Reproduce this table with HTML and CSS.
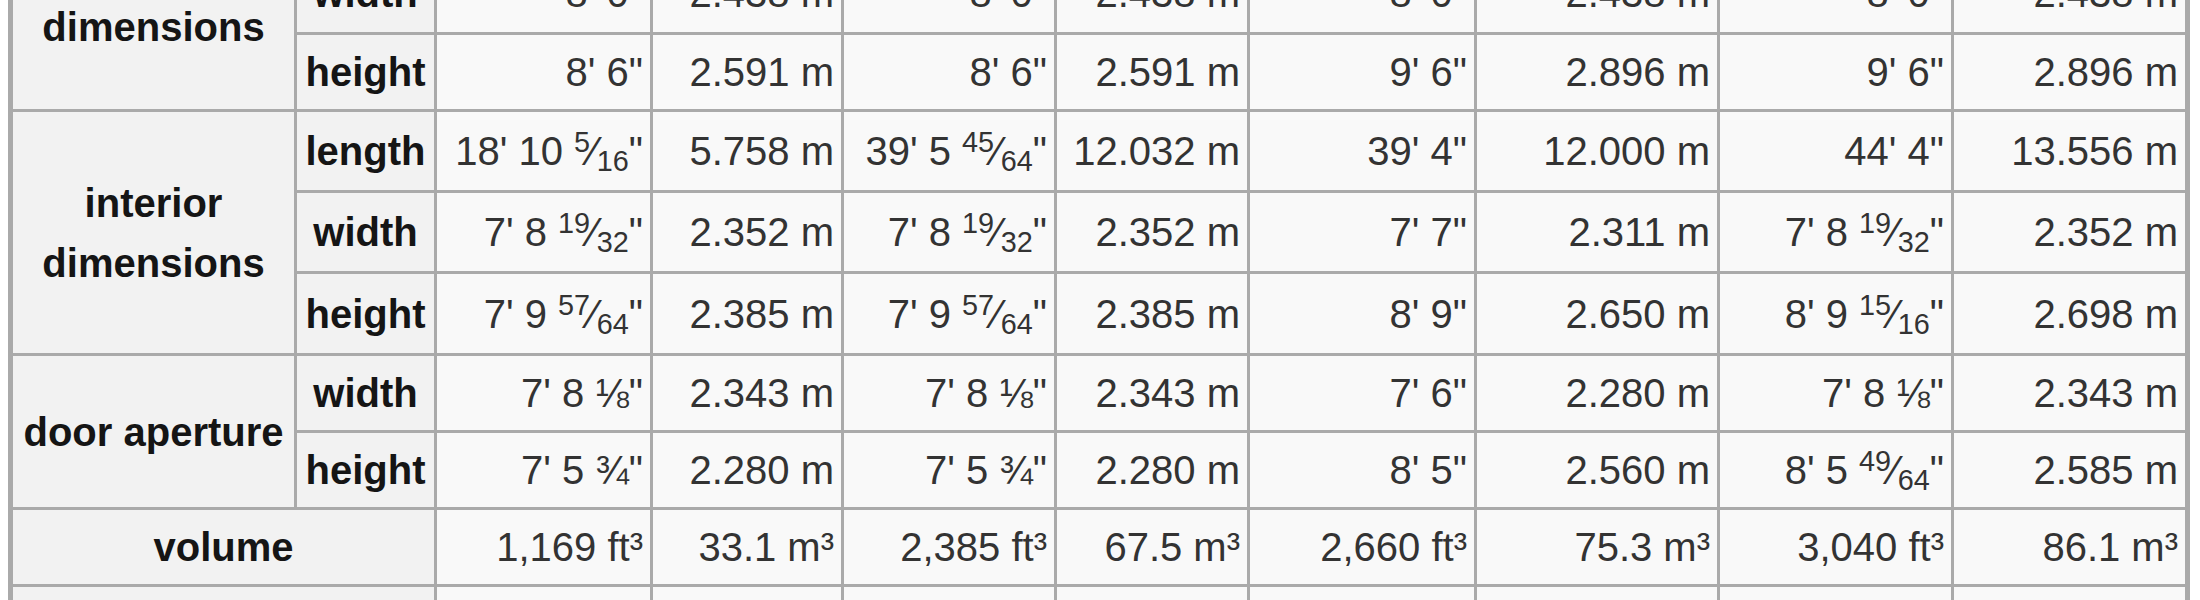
FILE: index.html
```html
<!DOCTYPE html>
<html lang="en">
<head>
<meta charset="utf-8">
<title>Container dimensions</title>
<link rel="stylesheet" href="styles.css">
</head>
<body>
<table class="spec">
  <colgroup>
    <col class="w-group">
    <col class="w-sub">
    <col class="w-d1">
    <col class="w-d2">
    <col class="w-d3">
    <col class="w-d4">
    <col class="w-d5">
    <col class="w-d6">
    <col class="w-d7">
    <col class="w-d8">
  </colgroup>
  <tbody>
    <tr class="rh-ext-len">
      <th class="grp" rowspan="3">external dimensions</th>
      <th class="sub">length</th>
      <td>19' 10 ½"</td><td>6.058 m</td><td>40' 0"</td><td>12.192 m</td><td>40' 0"</td><td>12.192 m</td><td>45' 0"</td><td>13.716 m</td>
    </tr>
    <tr class="rh-82">
      <th class="sub">width</th>
      <td>8' 0"</td><td>2.438 m</td><td>8' 0"</td><td>2.438 m</td><td>8' 0"</td><td>2.438 m</td><td>8' 0"</td><td>2.438 m</td>
    </tr>
    <tr class="rh-77">
      <th class="sub">height</th>
      <td>8' 6"</td><td>2.591 m</td><td>8' 6"</td><td>2.591 m</td><td>9' 6"</td><td>2.896 m</td><td>9' 6"</td><td>2.896 m</td>
    </tr>
    <tr class="rh-81">
      <th class="grp" rowspan="3">interior dimensions</th>
      <th class="sub">length</th>
      <td>18' 10 <sup>5</sup>⁄<sub>16</sub>"</td><td>5.758 m</td>
      <td>39' 5 <sup>45</sup>⁄<sub>64</sub>"</td><td>12.032 m</td>
      <td>39' 4"</td><td>12.000 m</td>
      <td>44' 4"</td><td>13.556 m</td>
    </tr>
    <tr class="rh-81">
      <th class="sub">width</th>
      <td>7' 8 <sup>19</sup>⁄<sub>32</sub>"</td><td>2.352 m</td>
      <td>7' 8 <sup>19</sup>⁄<sub>32</sub>"</td><td>2.352 m</td>
      <td>7' 7"</td><td>2.311 m</td>
      <td>7' 8 <sup>19</sup>⁄<sub>32</sub>"</td><td>2.352 m</td>
    </tr>
    <tr class="rh-82">
      <th class="sub">height</th>
      <td>7' 9 <sup>57</sup>⁄<sub>64</sub>"</td><td>2.385 m</td>
      <td>7' 9 <sup>57</sup>⁄<sub>64</sub>"</td><td>2.385 m</td>
      <td>8' 9"</td><td>2.650 m</td>
      <td>8' 9 <sup>15</sup>⁄<sub>16</sub>"</td><td>2.698 m</td>
    </tr>
    <tr class="rh-77">
      <th class="grp" rowspan="2">door aperture</th>
      <th class="sub">width</th>
      <td>7' 8 ⅛"</td><td>2.343 m</td>
      <td>7' 8 ⅛"</td><td>2.343 m</td>
      <td>7' 6"</td><td>2.280 m</td>
      <td>7' 8 ⅛"</td><td>2.343 m</td>
    </tr>
    <tr class="rh-77">
      <th class="sub">height</th>
      <td>7' 5 ¾"</td><td>2.280 m</td>
      <td>7' 5 ¾"</td><td>2.280 m</td>
      <td>8' 5"</td><td>2.560 m</td>
      <td>8' 5 <sup>49</sup>⁄<sub>64</sub>"</td><td>2.585 m</td>
    </tr>
    <tr class="rh-77">
      <th class="grp" colspan="2">volume</th>
      <td>1,169 ft³</td><td>33.1 m³</td>
      <td>2,385 ft³</td><td>67.5 m³</td>
      <td>2,660 ft³</td><td>75.3 m³</td>
      <td>3,040 ft³</td><td>86.1 m³</td>
    </tr>
    <tr class="rh-77">
      <th class="grp" colspan="2">empty weight</th>
      <td>4,850 lb</td><td>2,200 kg</td>
      <td>8,380 lb</td><td>3,800 kg</td>
      <td>8,598 lb</td><td>3,900 kg</td>
      <td>10,580 lb</td><td>4,800 kg</td>
    </tr>
  </tbody>
</table>
</body>
</html>
```
FILE: styles.css
```css
html, body {
  margin: 0;
  padding: 0;
  background: #ffffff;
}

body {
  font-family: "Liberation Sans", Arial, sans-serif;
  font-size: 40px;
  color: #333333;
  overflow: hidden;
}

.spec {
  table-layout: fixed;
  width: 2177px;
  border-collapse: collapse;
  border: 5px solid #aaaaaa;
  margin: -120px 0 0 8px;
  background: #f9f9f9;
}

.w-group { width: 285px; }
.w-sub { width: 140px; }
.w-d1 { width: 216px; }
.w-d2 { width: 191px; }
.w-d3 { width: 213px; }
.w-d4 { width: 193px; }
.w-d5 { width: 227px; }
.w-d6 { width: 243px; }
.w-d7 { width: 234px; }
.w-d8 { width: 235px; }

.rh-ext-len { height: 69px; }
.rh-77 { height: 77px; }
.rh-81 { height: 81px; }
.rh-82 { height: 82px; }

.spec th,
.spec td {
  border: 3px solid #aaaaaa;
  line-height: 60px;
  vertical-align: middle;
  white-space: nowrap;
  overflow: hidden;
}

.spec td {
  text-align: right;
  padding: 0 7px 0 3px;
  background: #f9f9f9;
  color: #333333;
}

.spec th {
  background: #f2f2f2;
  color: #151515;
  font-weight: bold;
  text-align: center;
  padding: 0 4px;
}

.spec th.grp {
  white-space: normal;
}

.spec sup,
.spec sub {
  font-size: 0.72em;
  line-height: 0;
}

.spec sup {
  vertical-align: 13px;
}

.spec sub {
  vertical-align: -6px;
}
```
